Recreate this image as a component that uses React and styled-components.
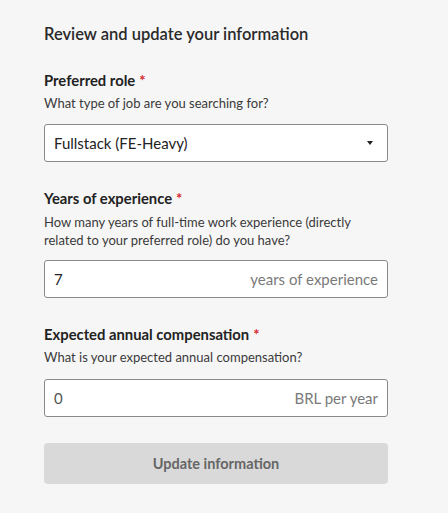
import React, { useState } from 'react';
import styled, { createGlobalStyle } from 'styled-components';

const GlobalStyle = createGlobalStyle`
  html, body {
    margin: 0;
    padding: 0;
    background: #f6f6f6;
  }
  body {
    font-family: "Lato", "Open Sans", sans-serif;
    color: #222;
  }
`;

const Page = styled.div`
  padding: 24px 60px 29px 44px;
  width: 344px;
`;

const Title = styled.h2`
  margin: 0 0 26px;
  font-size: 16.5px;
  line-height: 20px;
  font-weight: 600;
  color: #2a2a2a;
`;

const Field = styled.div`
  margin-bottom: 26px;
`;

const Label = styled.div`
  font-size: 14.8px;
  line-height: 20px;
  font-weight: 700;
  color: #222;
`;

const Required = styled.span`
  color: #d6262e;
  margin-left: 4px;
`;

const Hint = styled.div`
  margin-top: ${p => p.$top || 4}px;
  font-size: 13px;
  line-height: 18px;
  color: #3a3a3a;
`;

const Box = styled.div`
  margin-top: ${p => p.$top || 12}px;
  height: 38px;
  box-sizing: border-box;
  border: 1px solid #8a8a8a;
  border-radius: 3px;
  background: #fff;
  display: flex;
  align-items: center;
  padding: 0 9px 0 9px;
  font-size: 15px;
  color: #222;
`;

const Value = styled.span`
  flex: 1;
  color: ${p => p.$muted ? '#555' : '#222'};
`;

const Suffix = styled.span`
  color: #7a7a7a;
`;

const Caret = styled.span`
  width: 0;
  height: 0;
  border-left: 3.5px solid transparent;
  border-right: 3.5px solid transparent;
  border-top: 4.5px solid #222;
  margin-right: 5px;
`;

const Button = styled.button`
  display: block;
  width: 100%;
  height: 41px;
  border: none;
  border-radius: 4px;
  background: #d9d9d9;
  color: #666;
  font-family: inherit;
  font-size: 14.5px;
  font-weight: 700;
  cursor: not-allowed;
`;

export default function App() {
  const [role] = useState('Fullstack (FE-Heavy)');
  return (
    <Page>
      <GlobalStyle />
      <Title>Review and update your information</Title>

      <Field>
        <Label>Preferred role<Required>*</Required></Label>
        <Hint>What type of job are you searching for?</Hint>
        <Box>
          <Value>{role}</Value>
          <Caret />
        </Box>
      </Field>

      <Field>
        <Label>Years of experience<Required>*</Required></Label>
        <Hint $top={5}>How many years of full-time work experience (directly related to your preferred role) do you have?</Hint>
        <Box $top={11}>
          <Value>7</Value>
          <Suffix>years of experience</Suffix>
        </Box>
      </Field>

      <Field>
        <Label>Expected annual compensation<Required>*</Required></Label>
        <Hint>What is your expected annual compensation?</Hint>
        <Box $top={13}>
          <Value $muted>0</Value>
          <Suffix>BRL per year</Suffix>
        </Box>
      </Field>

      <Button disabled>Update information</Button>
    </Page>
  );
}
